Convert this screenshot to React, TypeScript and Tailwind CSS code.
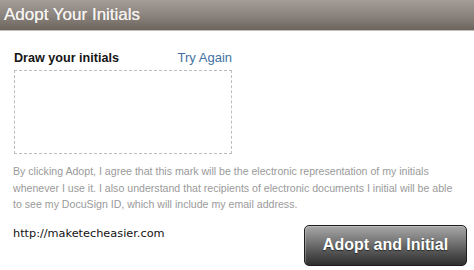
import React from "react";

export default function App() {
  return (
    <div className="w-[474px] h-[270px] bg-white overflow-hidden" style={{ fontFamily: '"Liberation Sans", Arial, sans-serif' }}>
      <div className="h-[31px] border-b border-[#c4bfba] bg-[linear-gradient(to_bottom,#a49d98,#8c847e_50%,#6c655d)] flex items-center pl-[4px]">
        <span className="text-[17px] leading-[30px] text-[#f4f2f0] [text-shadow:0_0_0.4px_#f4f2f0]">Adopt Your Initials</span>
      </div>
      <div className="pl-[14px]">
        <div className="mt-[19px] w-[218px] flex justify-between items-center h-[16px]">
          <span className="text-[12.6px] font-bold text-[#151515] leading-[16px]">Draw your initials</span>
          <span className="text-[13px] text-[#3f72a3] leading-[16px]">Try Again</span>
        </div>
        <div className="mt-[4px] w-[218px] h-[84px] border border-dashed border-[#bdbdbd]"></div>
        <p className="mt-[9px] -ml-[1px] text-[10.6px] leading-[16.5px] text-[#9a9a9a] whitespace-nowrap">
          By clicking Adopt, I agree that this mark will be the electronic representation of my initials
          <br />
          whenever I use it. I also understand that recipients of electronic documents I initial will be able
          <br />
          to see my DocuSign ID, which will include my email address.
        </p>
        <div className="mt-[12px] flex items-start justify-between pr-[7px]">
          <span className="mt-[2px] -ml-[1px] text-[11.3px] leading-[14px] text-[#111]" style={{ fontFamily: '"DejaVu Sans", sans-serif' }}>http://maketecheasier.com</span>
          <button className="w-[163px] h-[41px] rounded-[5px] border border-[#1e1e1e] bg-[linear-gradient(to_bottom,#a8a8a8,#707070_45%,#4a4a4a_75%,#2f2f2f)] text-white text-[16px] font-bold [text-shadow:0_1px_1px_rgba(0,0,0,0.6)] shadow-[inset_1px_1px_0_rgba(255,255,255,0.25)]">
            Adopt and Initial
          </button>
        </div>
      </div>
    </div>
  );
}
